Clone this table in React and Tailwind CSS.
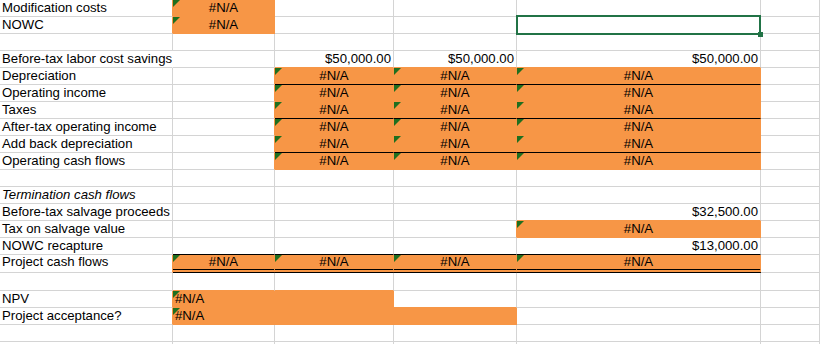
import React from "react";

const rows = [
  { a: "Modification costs", cells: { 1: { t: "#N/A", al: "c", f: 1, tri: 1 } } },
  { a: "NOWC", cells: { 1: { t: "#N/A", al: "c", f: 1, tri: 1 }, 4: { sel: 1 } } },
  { a: "" },
  {
    a: "Before-tax labor cost savings",
    over: 1,
    cells: {
      2: { t: "$50,000.00", al: "r" },
      3: { t: "$50,000.00", al: "r" },
      4: { t: "$50,000.00", al: "r" },
    },
  },
  { a: "Depreciation", na: 1, black: 1 },
  { a: "Operating income", na: 1 },
  { a: "Taxes", na: 1, black: 1 },
  { a: "After-tax operating income", na: 1 },
  { a: "Add back depreciation", na: 1, black: 1 },
  { a: "Operating cash flows", na: 1 },
  { a: "" },
  { a: "Termination cash flows", it: 1 },
  { a: "Before-tax salvage proceeds", cells: { 4: { t: "$32,500.00", al: "r" } } },
  { a: "Tax on salvage value", cells: { 4: { t: "#N/A", al: "c", f: 1, tri: 1 } } },
  { a: "NOWC recapture", cells: { 4: { t: "$13,000.00", al: "r" } }, blackB: 1 },
  {
    a: "Project cash flows",
    tall: 1,
    dbl: 1,
    cells: {
      1: { t: "#N/A", al: "c", f: 1, tri: 1 },
      2: { t: "#N/A", al: "c", f: 1, tri: 1 },
      3: { t: "#N/A", al: "c", f: 1, tri: 1 },
      4: { t: "#N/A", al: "c", f: 1, tri: 1 },
    },
  },
  { a: "", tall: 1 },
  { a: "NPV", cells: { 1: { t: "#N/A", al: "l", f: 1, tri: 1 }, 2: { f: 1 } } },
  {
    a: "Project acceptance?",
    cells: { 1: { t: "#N/A", al: "l", f: 1, tri: 1 }, 2: { f: 1 }, 3: { f: 1 } },
  },
  { a: "" },
  { a: "" },
];

function getCell(r, c) {
  const row = rows[r];
  if (!row) return {};
  if (c === 0) return { t: row.a, al: "l", it: row.it, over: row.over };
  if (row.na && c >= 2 && c <= 4) return { t: "#N/A", al: "c", f: 1, tri: 1 };
  return (row.cells && row.cells[c]) || {};
}

function isFill(r, c) {
  return !!getCell(r, c).f;
}

function Tri() {
  return (
    <span className="absolute left-0 top-0 w-0 h-0 border-t-[7px] border-r-[7px] border-t-[#1f6f1f] border-r-transparent" />
  );
}

function Cell({ r, c }) {
  const row = rows[r];
  const cell = getCell(r, c);
  const fill = !!cell.f;
  const blackBottom =
    (row.black && c >= 2 && c <= 4) || (row.blackB && c >= 1 && c <= 4);
  const dbl = row.dbl && c >= 1 && c <= 4;

  let rCls = "border-r-[#d4d4d4]";
  if (fill || isFill(r, c + 1)) rCls = "border-r-[#f79646]";
  if (cell.over) rCls = "border-r-transparent";

  let bCls = "border-b border-b-[#d4d4d4]";
  if (fill || isFill(r + 1, c)) bCls = "border-b border-b-[#f79646]";
  if (blackBottom) bCls = "border-b border-b-black";
  if (dbl) bCls = "border-b-4 border-double border-b-black";

  const alCls =
    cell.al === "c"
      ? "text-center"
      : cell.al === "r"
      ? "text-right pr-[2px]"
      : "text-left pl-[2px]";

  const lead = row.tall ? "leading-[14px]" : "leading-[16px]";

  let ovCls = " overflow-hidden";
  if (cell.over) ovCls = " overflow-visible z-[1]";
  if (cell.sel) ovCls = " overflow-visible z-10";

  return (
    <div
      className={
        "relative border-r whitespace-nowrap " +
        rCls +
        " " +
        bCls +
        " " +
        lead +
        " " +
        alCls +
        (fill ? " bg-[#f79646]" : "") +
        (cell.it ? " italic" : "") +
        ovCls
      }
    >
      {cell.tri ? <Tri /> : null}
      {cell.t || ""}
      {cell.sel ? (
        <span className="absolute left-[-1px] top-[-2px] right-[-1px] bottom-[-2px] border-2 border-[#217346]">
          <span className="absolute right-[-4px] bottom-[-4px] w-[5px] h-[5px] bg-[#217346]" />
        </span>
      ) : null}
    </div>
  );
}

export default function App() {
  return (
    <div className="w-[820px] h-[344px] overflow-hidden bg-white text-black text-[13.2px] font-['Liberation_Sans',Arial,sans-serif]">
      {rows.map((row, r) => (
        <div
          key={r}
          className={
            "grid grid-cols-[173px_102px_119px_123px_244px_1fr] " +
            (row.tall ? "h-[18px]" : "h-[17px]")
          }
        >
          {[0, 1, 2, 3, 4, 5].map((c) => (
            <Cell key={c} r={r} c={c} />
          ))}
        </div>
      ))}
    </div>
  );
}
